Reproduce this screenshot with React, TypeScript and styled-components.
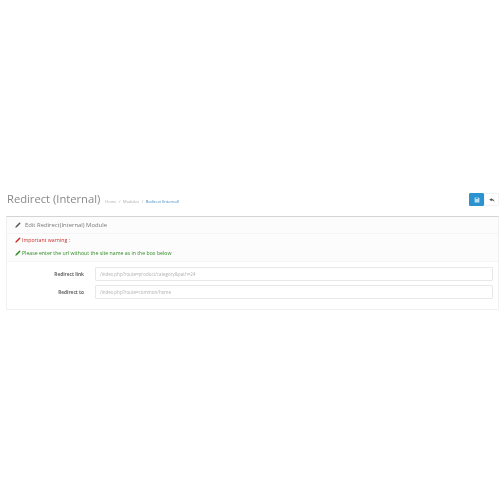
import React from "react";
import styled, { createGlobalStyle } from "styled-components";

const Global = createGlobalStyle`
  html, body { margin: 0; padding: 0; background: #fff; }
  body { font-family: "Open Sans", sans-serif; }
`;
const Page = styled.div`
  width: 500px; height: 500px; box-sizing: border-box; padding-top: 190px; overflow: hidden; background: #fff; filter: blur(0.3px);
`;
const Header = styled.div`
  display: flex; align-items: flex-start; justify-content: space-between; height: 26px; box-sizing: border-box;
  padding: 0 1px 0 7px;
`;
const TitleGroup = styled.div`display: flex; align-items: baseline; gap: 5px;`;
const Title = styled.h1`margin: 0; font-size: 11.2px; line-height: 18px; font-weight: 400; color: #888;`;
const Crumbs = styled.div`display: flex; align-items: baseline; font-size: 4px; gap: 2.5px;`;
const Crumb = styled.span<{ $active?: boolean }>`color: ${p => (p.$active ? "#3a86c0" : "#aaa")};`;
const Actions = styled.div`display: flex; padding-top: 3px;`;
const ActionButton = styled.div<{ $primary?: boolean }>`
  width: 15px; height: 13px; display: flex; align-items: center; justify-content: center; border-radius: 1px; box-sizing: border-box;
  background: ${p => (p.$primary ? "#2a93d0" : "#fff")};
  border: 1px solid ${p => (p.$primary ? "#2a93d0" : "#f2f2f2")};
`;
const Panel = styled.section`
  margin: 0 1px 0 6px; height: 94px; box-sizing: border-box; border: 1px solid #f0f0f0; border-top: 1px solid #d4d4d4; display: flex; flex-direction: column;
`;
const PanelHeading = styled.div`
  height: 15px; display: flex; align-items: center; gap: 4px; padding: 0 0 1px 8px; background: #fcfcfc; border-bottom: 1px solid #f4f4f4;
  font-size: 5.9px; color: #777; flex: none;
`;
const Notice = styled.div<{ $color: string }>`
  display: flex; align-items: center; gap: 1px; height: 12px; padding-left: 8px; font-size: 5.2px; color: ${p => p.$color}; flex: none;
`;
const Notices = styled.div`display: flex; flex-direction: column; gap: 1px; padding: 0 0 2px; background: #fcfcfc; border-bottom: 1px solid #f6f6f6;`;
const Form = styled.div`display: flex; flex-direction: column; gap: 4px; padding-top: 5px;`;
const Row = styled.div`display: flex; align-items: center; padding-right: 5px;`;
const Label = styled.label`width: 77px; text-align: right; font-size: 4.7px; font-weight: 700; color: #666; flex: none;`;
const Field = styled.div`
  flex: 1; margin-left: 11px; height: 14px; box-sizing: border-box; border: 1px solid #e8e8e8; border-radius: 1px; padding-left: 4px;
  display: flex; align-items: center; font-size: 4.5px; color: #b0b0b0; background: #fff;
`;
const Pencil = ({ color, size }: { color: string; size: number }) => (
  <svg width={size} height={size} viewBox="0 0 10 10"><path d="M0.5 9.5 L1.2 7 L7 1.2 Q7.8 .5 8.6 1.3 Q9.5 2.2 8.8 3 L3 8.8 Z" fill={color} /></svg>
);

export default function App() {
  return (
    <Page>
      <Global />
      <Header>
        <TitleGroup>
          <Title>Redirect (Internal)</Title>
          <Crumbs>
            <Crumb>Home</Crumb><Crumb>/</Crumb><Crumb>Modules</Crumb><Crumb>/</Crumb><Crumb $active>Redirect (Internal)</Crumb>
          </Crumbs>
        </TitleGroup>
        <Actions>
          <ActionButton $primary>
            <svg width="6" height="6" viewBox="0 0 10 10"><path d="M1 1 H7.5 L9 2.5 V9 H1 Z" fill="#bcdff3" /><rect x="3" y="1" width="3" height="2.5" fill="#2a93d0" /></svg>
          </ActionButton>
          <ActionButton>
            <svg width="6" height="6" viewBox="0 0 10 10"><path d="M4.5 1.5 L0.5 4.5 L4.5 7 V5.4 Q8 5.4 9 8.5 Q9 3.4 4.5 3.2 Z" fill="#555" /></svg>
          </ActionButton>
        </Actions>
      </Header>
      <Panel>
        <PanelHeading><Pencil color="#555" size={6} /><span>Edit Redirect(Internal) Module</span></PanelHeading>
        <Notices>
          <Notice $color="#c9302c"><Pencil color="#c9302c" size={6} /><span>Important warning :</span></Notice>
          <Notice $color="#2e8b22"><Pencil color="#2e8b22" size={6} /><span>Please enter the url without the site name as in the box below</span></Notice>
        </Notices>
        <Form>
          <Row><Label>Redirect link</Label><Field>/index.php?route=product/category&amp;path=24</Field></Row>
          <Row><Label>Redirect to</Label><Field>/index.php?route=common/home</Field></Row>
        </Form>
      </Panel>
    </Page>
  );
}
